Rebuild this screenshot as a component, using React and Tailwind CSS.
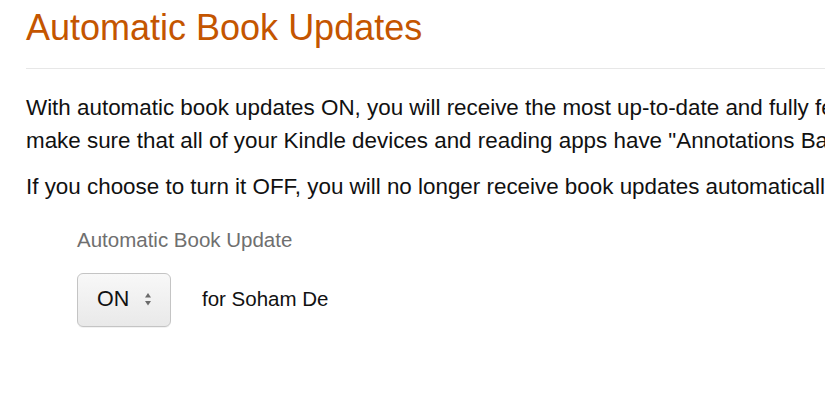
import React from 'react';

export default function App() {
  return (
    <div className="w-[825px] h-[406px] overflow-hidden bg-white font-['Liberation_Sans',Arial,sans-serif] text-[#111]">
      <div className="pl-[26px] pt-[6px]">
        <h1 className="text-[36px] leading-[44px] text-[#c45500] whitespace-nowrap">Automatic Book Updates</h1>
        <div className="mt-[18px] border-t border-[#e7e7e7]" />

        <div className="mt-[23px] text-[22.4px] leading-[32.5px] whitespace-nowrap">
          <p>
            With automatic book updates ON, you will receive the most up-to-date and fully featured version of your books. To get these updates,
            <br />
            make sure that all of your Kindle devices and reading apps have "Annotations Backup" turned on.
          </p>
          <p className="mt-[14px]">If you choose to turn it OFF, you will no longer receive book updates automatically.</p>
        </div>

        <div className="ml-[51px] mt-[22px]">
          <div className="text-[20.5px] leading-[28px] text-[#6f6f6f]">Automatic Book Update</div>
          <div className="mt-[19px] flex items-center">
            <div className="w-[94px] h-[54px] flex items-center pl-[19px] rounded-[6px] border border-[#c4c4c4] bg-gradient-to-b from-[#f8f8f8] to-[#e9e9e9] shadow-[0_1px_0_rgba(0,0,0,0.05)]">
              <span className="text-[21.5px] text-[#111]">ON</span>
              <svg className="ml-[16px]" width="6" height="13" viewBox="0 0 6 13">
                <path d="M3 0 L6 4.5 L0 4.5 Z" fill="#6b6b6b" />
                <path d="M0 8 L6 8 L3 12.5 Z" fill="#6b6b6b" />
              </svg>
            </div>
            <span className="ml-[31px] text-[20.5px] text-[#111]">for Soham De</span>
          </div>
        </div>
      </div>
    </div>
  );
}
